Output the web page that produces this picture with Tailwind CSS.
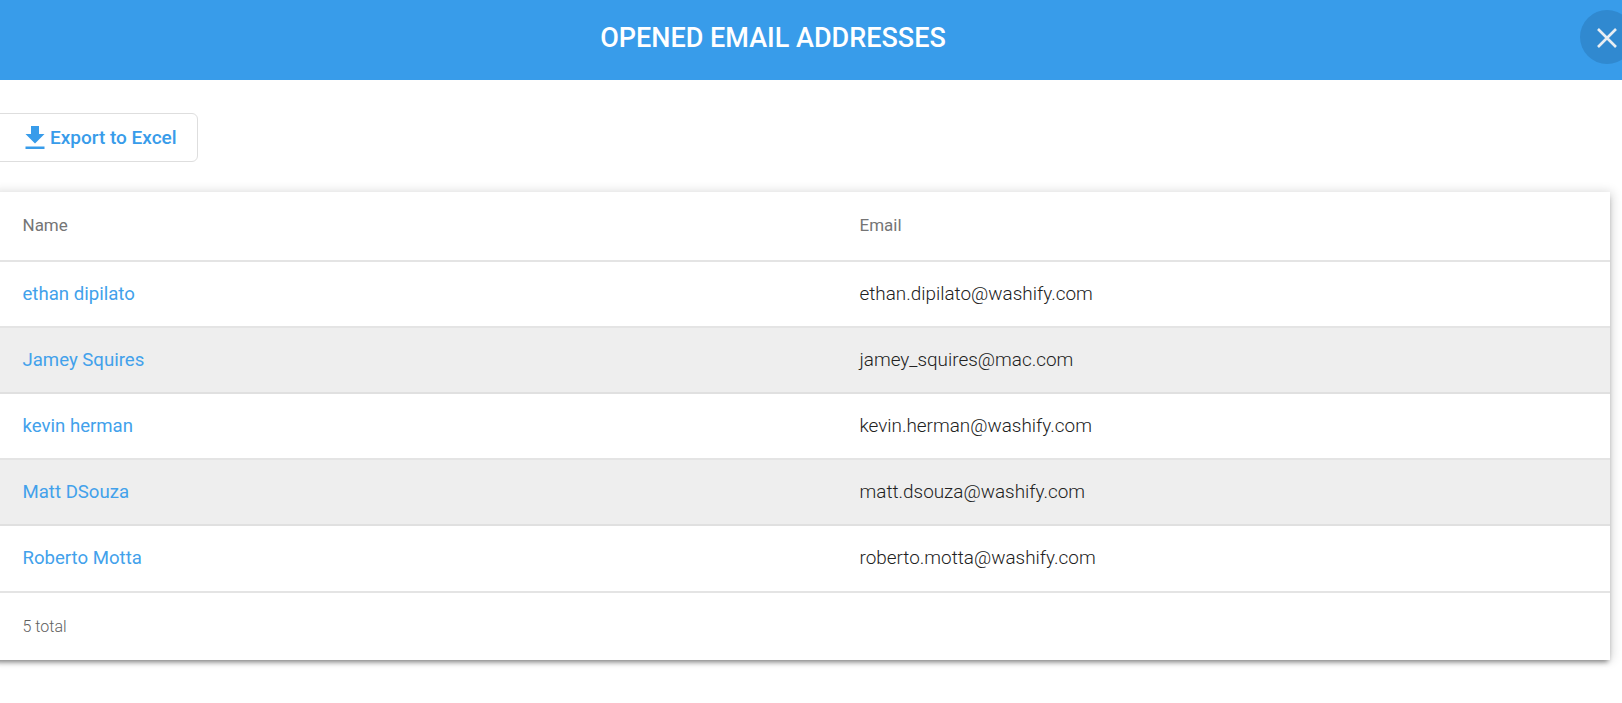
<!DOCTYPE html>
<html lang="en">
<head>
  <meta charset="UTF-8" />
  <title>Opened email addresses</title>
  <script src="https://cdn.jsdelivr.net/npm/@tailwindcss/browser@4"></script>
</head>
<body class="bg-white overflow-hidden h-[703px] font-['Roboto',sans-serif]">
  <!-- Header -->
  <header class="relative h-[80px] bg-[#389cea] flex items-center justify-center overflow-hidden pr-[76px]">
    <h1 class="text-white text-[27px] font-medium leading-none pb-[4px]">OPENED EMAIL ADDRESSES</h1>
    <button class="absolute left-[1580px] top-[10px] w-[54px] h-[54px] rounded-full bg-[#3089d0] flex items-center justify-center">
      <svg width="20" height="20" viewBox="0 0 20 20" class="mt-[1px]"><path d="M1 1 L19 19 M19 1 L1 19" stroke="#e8eef3" stroke-width="2.6" fill="none"/></svg>
    </button>
  </header>

  <main class="pt-[33px]">
    <!-- Export -->
    <button class="ml-[-10px] w-[208px] h-[49px] border border-[#dedede] rounded-[6px] bg-white flex items-center pl-[34px] gap-[5px] text-[#389cea] text-[19px] font-medium">
      <svg width="20" height="23" viewBox="0 0 20 23"><path d="M6 0h8v8h5.5L10 17.5 0.5 8H6z M0.5 20.5h19V23H0.5z" fill="#389cea"/></svg>
      <span class="pt-[2px]">Export to Excel</span>
    </button>

    <!-- Table -->
    <section class="mt-[30px] ml-[-10px] w-[1620px] bg-white shadow-[0_4px_5px_-2px_rgba(0,0,0,0.45),2px_0_10px_rgba(0,0,0,0.16)]">
      <div class="grid grid-cols-[837px_1fr] h-[70px] items-center pl-[32.5px] border-b-2 border-[#e4e4e4] text-[17px] text-[#757575]">
        <div>Name</div>
        <div>Email</div>
      </div>
      <div class="grid grid-cols-[837px_1fr] h-[66px] items-center pl-[32.5px] border-b-2 border-[#e4e4e4] text-[18.9px] font-light">
        <a class="text-[#42a1eb] text-[18.6px] font-normal pt-[1px]">ethan dipilato</a>
        <div class="text-[#212121]">ethan.dipilato@washify.com</div>
      </div>
      <div class="grid grid-cols-[837px_1fr] h-[66px] items-center pl-[32.5px] border-b-2 border-[#e0e0e0] bg-[#eeeeee] text-[18.9px] font-light">
        <a class="text-[#42a1eb] text-[18.6px] font-normal pt-[1px]">Jamey Squires</a>
        <div class="text-[#212121]">jamey_squires@mac.com</div>
      </div>
      <div class="grid grid-cols-[837px_1fr] h-[66px] items-center pl-[32.5px] border-b-2 border-[#e4e4e4] text-[18.9px] font-light">
        <a class="text-[#42a1eb] text-[18.6px] font-normal pt-[1px]">kevin herman</a>
        <div class="text-[#212121]">kevin.herman@washify.com</div>
      </div>
      <div class="grid grid-cols-[837px_1fr] h-[66px] items-center pl-[32.5px] border-b-2 border-[#e0e0e0] bg-[#eeeeee] text-[18.9px] font-light">
        <a class="text-[#42a1eb] text-[18.6px] font-normal pt-[1px]">Matt DSouza</a>
        <div class="text-[#212121]">matt.dsouza@washify.com</div>
      </div>
      <div class="grid grid-cols-[837px_1fr] h-[67px] items-center pl-[32.5px] border-b-2 border-[#e4e4e4] text-[18.9px] font-light">
        <a class="text-[#42a1eb] text-[18.6px] font-normal">Roberto Motta</a>
        <div class="text-[#212121]">roberto.motta@washify.com</div>
      </div>
      <div class="h-[67px] flex items-center pl-[32.5px] text-[16px] text-[#616161] font-light">5 total</div>
    </section>
  </main>
</body>
</html>
